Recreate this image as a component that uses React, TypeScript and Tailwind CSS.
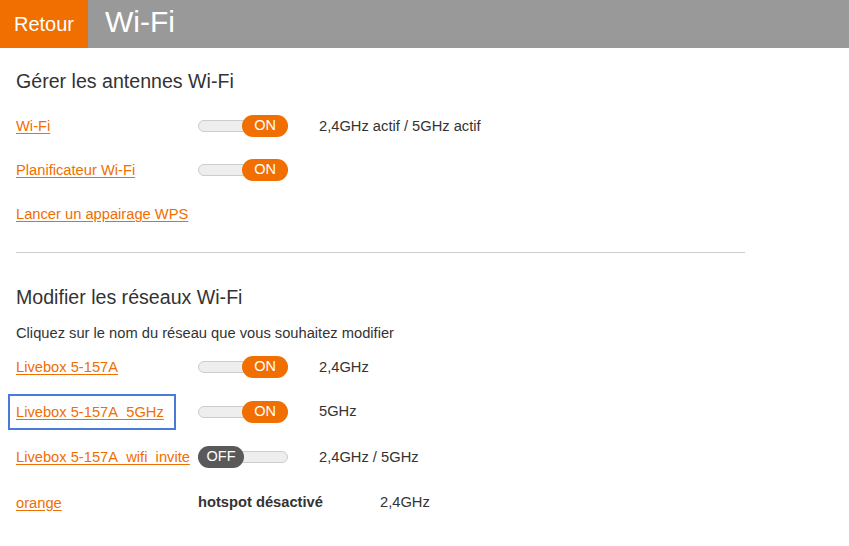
import React from "react";

function Toggle({ on }: { on: boolean }) {
  return (
    <div className="relative w-[90px] h-[22px] shrink-0">
      <div className="absolute left-0 right-0 top-[5px] h-[12px] rounded-full bg-[#eeeeee] border border-[#cccccc]" />
      {on ? (
        <div className="absolute right-0 top-0 w-[46px] h-[22px] rounded-full bg-[#f16e00] text-white text-[14.5px] leading-[20px] text-center">
          ON
        </div>
      ) : (
        <div className="absolute left-0 top-0 w-[46px] h-[22px] rounded-full bg-[#595959] text-white text-[14.5px] leading-[20px] text-center">
          OFF
        </div>
      )}
    </div>
  );
}

function LinkText({ children }: { children: React.ReactNode }) {
  return (
    <a href="#" className="text-[#f16e00] underline underline-offset-2 text-[14.7px] leading-[16px]">
      {children}
    </a>
  );
}

function Row({
  label,
  on,
  status,
  h = "h-[44px]",
  focused = false,
}: {
  label: string;
  on?: boolean;
  status?: string;
  h?: string;
  focused?: boolean;
}) {
  return (
    <div className={`flex items-center ${h}`}>
      <div className="w-[182px] shrink-0">
        {focused ? (
          <span className="relative inline-block">
            <LinkText>{label}</LinkText>
            <span className="absolute -left-[8px] -right-[12px] -top-[6px] -bottom-[6px] border-2 border-[#4a7bd8]" />
          </span>
        ) : (
          <LinkText>{label}</LinkText>
        )}
      </div>
      {on !== undefined && <Toggle on={on} />}
      {status && <div className="ml-[31px] text-[14.7px] text-[#333333]">{status}</div>}
    </div>
  );
}

export default function App() {
  return (
    <div
      className="w-[849px] h-[546px] bg-white overflow-hidden"
      style={{ fontFamily: '"Liberation Sans", Arial, sans-serif' }}
    >
      <div className="flex h-[48px] bg-[#999999]">
        <div className="w-[88px] bg-[#f16e00] text-white text-[20px] flex items-center justify-center">
          Retour
        </div>
        <div className="pl-[17px] text-white text-[30px] leading-[44px]">Wi-Fi</div>
      </div>
      <div className="px-[16px]">
        <div className="mt-[21px] text-[19.6px] leading-[24px] text-[#333333]">Gérer les antennes Wi-Fi</div>
        <div className="mt-[11px]">
          <Row label="Wi-Fi" on={true} status="2,4GHz actif / 5GHz actif" />
          <Row label="Planificateur Wi-Fi" on={true} />
          <Row label="Lancer un appairage WPS" />
        </div>
        <div className="mt-[16px] w-[729px] h-px bg-[#cccccc]" />
        <div className="mt-[32px] text-[19.6px] leading-[24px] text-[#333333]">Modifier les réseaux Wi-Fi</div>
        <div className="mt-[14px] text-[14.7px] leading-[20px] text-[#333333]">
          Cliquez sur le nom du réseau que vous souhaitez modifier
        </div>
        <div className="mt-[2px]">
          <Row label="Livebox 5-157A" on={true} status="2,4GHz" h="h-[44px]" />
          <Row label="Livebox 5-157A_5GHz" on={true} status="5GHz" h="h-[45px]" focused />
          <Row label="Livebox 5-157A_wifi_invite" on={false} status="2,4GHz / 5GHz" h="h-[46px]" />
          <div className="flex items-center h-[45px]">
            <div className="w-[182px] shrink-0">
              <LinkText>orange</LinkText>
            </div>
            <div className="w-[182px] shrink-0 text-[14.7px] font-bold text-[#333333]">hotspot désactivé</div>
            <div className="text-[14.7px] text-[#333333]">2,4GHz</div>
          </div>
        </div>
      </div>
    </div>
  );
}
